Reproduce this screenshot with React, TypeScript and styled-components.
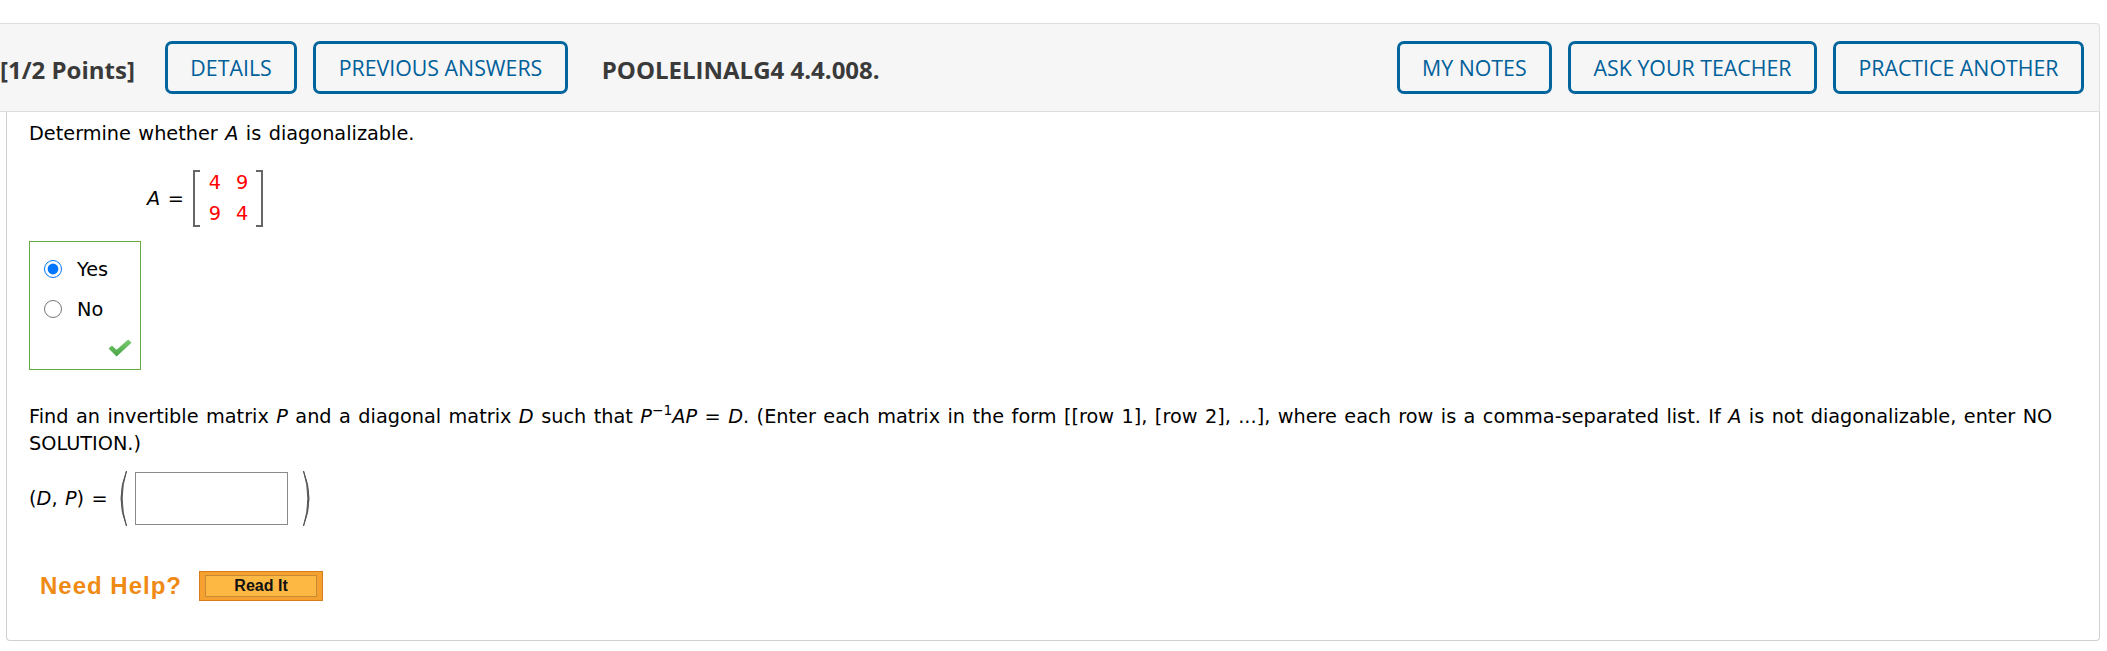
import React from "react";
import styled, { createGlobalStyle } from "styled-components";

const GlobalStyle = createGlobalStyle`
  html, body { margin: 0; padding: 0; background: #ffffff; }
  body { font-family: "DejaVu Sans", Verdana, sans-serif; color: #000; }
  * { box-sizing: border-box; }
`;

const Page = styled.div`
  padding: 23px 7px 0 0;
  overflow: hidden;
`;

const Header = styled.header`
  display: flex;
  align-items: center;
  height: 89px;
  background: #f6f6f6;
  border: 1px solid #dedede;
  border-left: none;
  border-top-right-radius: 4px;
  padding-right: 15px;
  font-family: "Open Sans", sans-serif;
`;

const HeaderText = styled.span<{ $side: "left" | "right" }>`
  font-size: 24px;
  font-weight: 700;
  color: #3a3a3a;
  white-space: nowrap;
  margin-top: 3px;
  ${(p) => (p.$side === "left" ? "margin-right: 30px;" : "margin-left: 34px;")}
`;

const ButtonGroup = styled.div`
  display: flex;
  gap: 16px;
`;

const Spacer = styled.div`
  flex: 1;
`;

const HeaderButton = styled.button`
  height: 53px;
  padding: 0 22.5px;
  border: 3px solid #00649d;
  border-radius: 7px;
  background: transparent;
  color: #00609a;
  font-family: "Open Sans", sans-serif;
  font-size: 21.33px;
  font-weight: 400;
  line-height: 1;
  white-space: nowrap;
  cursor: pointer;
`;

const Body = styled.section`
  margin-left: 6px;
  border: 1px solid #d0d0d0;
  border-top: none;
  border-radius: 0 0 4px 4px;
  padding: 8px 22px 39px 22px;
  font-size: 19.3px;
  line-height: 27px;
  word-spacing: 1.3px;
`;

const Line = styled.p<{ $mt?: number }>`
  margin: ${(p) => p.$mt ?? 0}px 0 0 0;
`;

const Var = styled.i`
  font-style: italic;
`;

const Sup = styled.sup`
  font-size: 0.72em;
  line-height: 0;
  vertical-align: 0.55em;
`;

const MatrixRow = styled.div`
  display: flex;
  align-items: center;
  margin: 20px 0 0 118px;
  height: 62px;
`;

const MatrixLabel = styled.span`
  margin-right: 9px;
  white-space: nowrap;
`;

const Bracket = styled.span<{ $side: "left" | "right" }>`
  display: block;
  width: 7px;
  height: 57px;
  border: 2px solid #666;
  ${(p) => (p.$side === "left" ? "border-right: none;" : "border-left: none;")}
`;

const MatrixGrid = styled.div`
  display: grid;
  grid-template-columns: auto auto;
  grid-auto-rows: 31px;
  column-gap: 15px;
  align-items: center;
  margin: 0 8px 0 9px;
  color: #ff0000;
  line-height: 31px;
`;

const ChoiceBox = styled.div`
  margin-top: 12px;
  width: 112px;
  border: 1px solid #6aaa45;
  padding: 7px 8px 11px 14px;
  display: flex;
  flex-direction: column;
`;

const Option = styled.label`
  display: flex;
  align-items: center;
  height: 40px;
  gap: 15px;
  cursor: pointer;
`;

const Radio = styled.input`
  width: 18px;
  height: 18px;
  margin: 0;
  accent-color: #0075ff;
`;

const CheckRow = styled.div`
  display: flex;
  justify-content: flex-end;
  margin-top: 10px;
  height: 19px;
`;

const AnswerRow = styled.div`
  display: flex;
  align-items: center;
  margin-top: 13px;
  height: 57px;
`;

const AnswerLabel = styled.span`
  white-space: nowrap;
  margin-right: 7px;
`;

const AnswerInput = styled.input`
  width: 153px;
  height: 53px;
  border: 1px solid #8a8a8a;
  margin: 0 14px 0 7px;
  padding: 0 6px;
  font-family: "DejaVu Sans", Verdana, sans-serif;
  font-size: 18px;
  background: #fff;
`;

const HelpRow = styled.div`
  display: flex;
  align-items: center;
  margin: 44px 0 0 11px;
  height: 30px;
  gap: 17px;
`;

const HelpText = styled.span`
  font-family: "Liberation Sans", Arial, sans-serif;
  font-weight: 700;
  font-size: 24px;
  letter-spacing: 1px;
  word-spacing: 0;
  color: #ef8a14;
  line-height: 1;
`;

const ReadItButton = styled.button`
  width: 124px;
  height: 30px;
  padding: 3px 5px;
  background: #f5a12f;
  border: 1px solid #d67d17;
  cursor: pointer;
  display: flex;
`;

const ReadItInner = styled.span`
  flex: 1;
  display: flex;
  align-items: center;
  justify-content: center;
  background: #fdb743;
  border: 1px solid #c88a36;
  font-family: "Liberation Sans", Arial, sans-serif;
  font-weight: 700;
  font-size: 16px;
  word-spacing: 0;
  color: #111;
`;

const Paren = ({ flip }: { flip?: boolean }) => (
  <svg width="13" height="57" viewBox="0 0 13 57" style={{ transform: flip ? "scaleX(-1)" : undefined }}>
    <path d="M11.5 1 Q0.5 28.5 11.5 56 Q2.8 28.5 11.5 1 Z" fill="#555" stroke="#555" strokeWidth="1" strokeLinejoin="round" />
  </svg>
);

const CheckMark = () => (
  <svg width="24" height="18" viewBox="0 0 24 18">
    <defs>
      <linearGradient id="chk" x1="0" y1="0" x2="0" y2="1">
        <stop offset="0" stopColor="#7ccc72" />
        <stop offset="1" stopColor="#47a344" />
      </linearGradient>
    </defs>
    <path d="M0.5 9.5 L4 6.5 L8.5 10.8 L20.2 0.5 L23.5 3.8 L8.6 17.5 Z" fill="url(#chk)" />
  </svg>
);

export default function App() {
  return (
    <Page>
      <GlobalStyle />
      <Header>
        <HeaderText $side="left">[1/2 Points]</HeaderText>
        <ButtonGroup>
          <HeaderButton>DETAILS</HeaderButton>
          <HeaderButton>PREVIOUS ANSWERS</HeaderButton>
        </ButtonGroup>
        <HeaderText $side="right">POOLELINALG4 4.4.008.</HeaderText>
        <Spacer />
        <ButtonGroup>
          <HeaderButton>MY NOTES</HeaderButton>
          <HeaderButton>ASK YOUR TEACHER</HeaderButton>
          <HeaderButton>PRACTICE ANOTHER</HeaderButton>
        </ButtonGroup>
      </Header>
      <Body>
        <Line>
          Determine whether <Var>A</Var> is diagonalizable.
        </Line>
        <MatrixRow>
          <MatrixLabel>
            <Var>A</Var> =
          </MatrixLabel>
          <Bracket $side="left" />
          <MatrixGrid>
            <span>4</span>
            <span>9</span>
            <span>9</span>
            <span>4</span>
          </MatrixGrid>
          <Bracket $side="right" />
        </MatrixRow>
        <ChoiceBox>
          <Option>
            <Radio type="radio" name="diag" defaultChecked />
            Yes
          </Option>
          <Option>
            <Radio type="radio" name="diag" />
            No
          </Option>
          <CheckRow>
            <CheckMark />
          </CheckRow>
        </ChoiceBox>
        <Line $mt={33}>
          Find an invertible matrix <Var>P</Var> and a diagonal matrix <Var>D</Var> such that <Var>P</Var>
          <Sup>−1</Sup>
          <Var>AP</Var> = <Var>D</Var>. (Enter each matrix in the form [[row 1], [row 2], ...], where each row is a
          comma-separated list. If <Var>A</Var> is not diagonalizable, enter NO SOLUTION.)
        </Line>
        <AnswerRow>
          <AnswerLabel>
            (<Var>D</Var>, <Var>P</Var>) =
          </AnswerLabel>
          <Paren />
          <AnswerInput type="text" aria-label="(D, P)" />
          <Paren flip />
        </AnswerRow>
        <HelpRow>
          <HelpText>Need Help?</HelpText>
          <ReadItButton>
            <ReadItInner>Read It</ReadItInner>
          </ReadItButton>
        </HelpRow>
      </Body>
    </Page>
  );
}
